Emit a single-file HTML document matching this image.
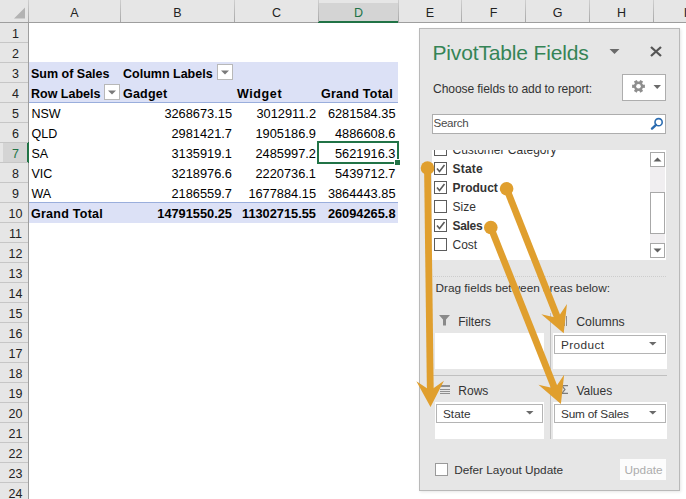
<!DOCTYPE html>
<html><head><meta charset="utf-8"><style>
html,body{margin:0;padding:0;}
body{width:686px;height:499px;overflow:hidden;position:relative;background:#fff;font-family:"Liberation Sans",sans-serif;}
.r{position:absolute;box-sizing:content-box;}
.t{position:absolute;white-space:pre;line-height:1;}
.c{text-align:center;}
</style></head><body>
<div class="r" style="left:0;top:0;width:686px;height:22px;background:#e6e6e6"></div>
<div class="r" style="left:0;top:22px;width:686px;height:1px;background:#9e9e9e"></div>
<div class="r" style="left:318px;top:3px;width:80px;height:18px;background:#d4d4d4"></div>
<div class="r" style="left:318px;top:21px;width:80px;height:2px;background:#217346"></div>
<div class="t c" style="left:54.5px;width:40px;top:7.42px;font-size:12.5px;color:#222">A</div>
<div class="t c" style="left:157.5px;width:40px;top:7.42px;font-size:12.5px;color:#222">B</div>
<div class="t c" style="left:256.5px;width:40px;top:7.42px;font-size:12.5px;color:#222">C</div>
<div class="t c" style="left:338.5px;width:40px;top:7.42px;font-size:12.5px;color:#217346">D</div>
<div class="t c" style="left:410.0px;width:40px;top:7.42px;font-size:12.5px;color:#222">E</div>
<div class="t c" style="left:473.5px;width:40px;top:7.42px;font-size:12.5px;color:#222">F</div>
<div class="t c" style="left:537.5px;width:40px;top:7.42px;font-size:12.5px;color:#222">G</div>
<div class="t c" style="left:601.5px;width:40px;top:7.42px;font-size:12.5px;color:#222">H</div>
<div class="t c" style="left:665.5px;width:40px;top:7.42px;font-size:12.5px;color:#222">I</div>
<div class="r" style="left:28px;top:0px;width:1px;height:22px;background:linear-gradient(#cfcfcf,#a8a8a8)"></div>
<div class="r" style="left:120px;top:0px;width:1px;height:22px;background:linear-gradient(#cfcfcf,#a8a8a8)"></div>
<div class="r" style="left:234px;top:0px;width:1px;height:22px;background:linear-gradient(#cfcfcf,#a8a8a8)"></div>
<div class="r" style="left:318px;top:0px;width:1px;height:22px;background:linear-gradient(#cfcfcf,#a8a8a8)"></div>
<div class="r" style="left:398px;top:0px;width:1px;height:22px;background:linear-gradient(#cfcfcf,#a8a8a8)"></div>
<div class="r" style="left:461px;top:0px;width:1px;height:22px;background:linear-gradient(#cfcfcf,#a8a8a8)"></div>
<div class="r" style="left:525px;top:0px;width:1px;height:22px;background:linear-gradient(#cfcfcf,#a8a8a8)"></div>
<div class="r" style="left:589px;top:0px;width:1px;height:22px;background:linear-gradient(#cfcfcf,#a8a8a8)"></div>
<div class="r" style="left:653px;top:0px;width:1px;height:22px;background:linear-gradient(#cfcfcf,#a8a8a8)"></div>
<svg class="r" style="left:0;top:0" width="28" height="22"><polygon points="14,18.5 25,18.5 25,7.5" fill="#b3b3b3"/></svg>
<div class="r" style="left:0;top:23px;width:28px;height:476px;background:#e6e6e6"></div>
<div class="r" style="left:28px;top:22px;width:1px;height:477px;background:#9e9e9e"></div>
<div class="r" style="left:3px;top:143px;width:24px;height:19px;background:#d4d4d4"></div>
<div class="r" style="left:27px;top:142px;width:2px;height:21px;background:#217346"></div>
<div class="r" style="left:0;top:42px;width:28px;height:1px;background:#c6c6c6"></div>
<div class="t c" style="left:0px;width:31px;top:28.42px;font-size:12.5px;color:#222">1</div>
<div class="r" style="left:0;top:62px;width:28px;height:1px;background:#c6c6c6"></div>
<div class="t c" style="left:0px;width:31px;top:48.42px;font-size:12.5px;color:#222">2</div>
<div class="r" style="left:0;top:82px;width:28px;height:1px;background:#c6c6c6"></div>
<div class="t c" style="left:0px;width:31px;top:68.42px;font-size:12.5px;color:#222">3</div>
<div class="r" style="left:0;top:102px;width:28px;height:1px;background:#c6c6c6"></div>
<div class="t c" style="left:0px;width:31px;top:88.42px;font-size:12.5px;color:#222">4</div>
<div class="r" style="left:0;top:122px;width:28px;height:1px;background:#c6c6c6"></div>
<div class="t c" style="left:0px;width:31px;top:108.42px;font-size:12.5px;color:#222">5</div>
<div class="r" style="left:0;top:142px;width:28px;height:1px;background:#c6c6c6"></div>
<div class="t c" style="left:0px;width:31px;top:128.42px;font-size:12.5px;color:#222">6</div>
<div class="r" style="left:0;top:162px;width:28px;height:1px;background:#c6c6c6"></div>
<div class="t c" style="left:0px;width:31px;top:148.42px;font-size:12.5px;color:#217346">7</div>
<div class="r" style="left:0;top:182px;width:28px;height:1px;background:#c6c6c6"></div>
<div class="t c" style="left:0px;width:31px;top:168.42px;font-size:12.5px;color:#222">8</div>
<div class="r" style="left:0;top:202px;width:28px;height:1px;background:#c6c6c6"></div>
<div class="t c" style="left:0px;width:31px;top:188.42px;font-size:12.5px;color:#222">9</div>
<div class="r" style="left:0;top:222px;width:28px;height:1px;background:#c6c6c6"></div>
<div class="t c" style="left:0px;width:31px;top:208.42px;font-size:12.5px;color:#222">10</div>
<div class="r" style="left:0;top:242px;width:28px;height:1px;background:#c6c6c6"></div>
<div class="t c" style="left:0px;width:31px;top:228.42px;font-size:12.5px;color:#222">11</div>
<div class="r" style="left:0;top:262px;width:28px;height:1px;background:#c6c6c6"></div>
<div class="t c" style="left:0px;width:31px;top:248.42px;font-size:12.5px;color:#222">12</div>
<div class="r" style="left:0;top:282px;width:28px;height:1px;background:#c6c6c6"></div>
<div class="t c" style="left:0px;width:31px;top:268.42px;font-size:12.5px;color:#222">13</div>
<div class="r" style="left:0;top:302px;width:28px;height:1px;background:#c6c6c6"></div>
<div class="t c" style="left:0px;width:31px;top:288.42px;font-size:12.5px;color:#222">14</div>
<div class="r" style="left:0;top:322px;width:28px;height:1px;background:#c6c6c6"></div>
<div class="t c" style="left:0px;width:31px;top:308.42px;font-size:12.5px;color:#222">15</div>
<div class="r" style="left:0;top:342px;width:28px;height:1px;background:#c6c6c6"></div>
<div class="t c" style="left:0px;width:31px;top:328.42px;font-size:12.5px;color:#222">16</div>
<div class="r" style="left:0;top:362px;width:28px;height:1px;background:#c6c6c6"></div>
<div class="t c" style="left:0px;width:31px;top:348.42px;font-size:12.5px;color:#222">17</div>
<div class="r" style="left:0;top:382px;width:28px;height:1px;background:#c6c6c6"></div>
<div class="t c" style="left:0px;width:31px;top:368.42px;font-size:12.5px;color:#222">18</div>
<div class="r" style="left:0;top:402px;width:28px;height:1px;background:#c6c6c6"></div>
<div class="t c" style="left:0px;width:31px;top:388.42px;font-size:12.5px;color:#222">19</div>
<div class="r" style="left:0;top:422px;width:28px;height:1px;background:#c6c6c6"></div>
<div class="t c" style="left:0px;width:31px;top:408.42px;font-size:12.5px;color:#222">20</div>
<div class="r" style="left:0;top:442px;width:28px;height:1px;background:#c6c6c6"></div>
<div class="t c" style="left:0px;width:31px;top:428.42px;font-size:12.5px;color:#222">21</div>
<div class="r" style="left:0;top:462px;width:28px;height:1px;background:#c6c6c6"></div>
<div class="t c" style="left:0px;width:31px;top:448.42px;font-size:12.5px;color:#222">22</div>
<div class="r" style="left:0;top:482px;width:28px;height:1px;background:#c6c6c6"></div>
<div class="t c" style="left:0px;width:31px;top:468.42px;font-size:12.5px;color:#222">23</div>
<div class="r" style="left:0;top:502px;width:28px;height:1px;background:#c6c6c6"></div>
<div class="t c" style="left:0px;width:31px;top:488.42px;font-size:12.5px;color:#222">24</div>
<div class="r" style="left:29px;top:62px;width:369px;height:40px;background:#dce1f6"></div>
<div class="r" style="left:29px;top:102px;width:369px;height:1px;background:#9aaedc"></div>
<div class="r" style="left:29px;top:202px;width:369px;height:1px;background:#9aaedc"></div>
<div class="r" style="left:29px;top:203px;width:369px;height:20px;background:#dce1f6"></div>
<div class="t" style="left:31.00px;top:68.42px;font-size:12.5px;font-weight:bold;color:#000;">Sum of Sales</div>
<div class="t" style="left:123.00px;top:68.42px;font-size:12.5px;font-weight:bold;color:#000;">Column Labels</div>
<div class="t" style="left:31.00px;top:88.42px;font-size:12.5px;font-weight:bold;color:#000;">Row Labels</div>
<div class="t" style="left:123.00px;top:88.42px;font-size:12.5px;font-weight:bold;color:#000;letter-spacing:0.2px">Gadget</div>
<div class="t" style="left:237.00px;top:88.42px;font-size:12.5px;font-weight:bold;color:#000;letter-spacing:0.6px">Widget</div>
<div class="t" style="left:321.00px;top:88.42px;font-size:12.5px;font-weight:bold;color:#000;letter-spacing:0.25px">Grand Total</div>
<div class="r" style="left:217px;top:64px;width:14px;height:14px;background:#fff;border:1px solid #b8b8b8"></div><svg class="r" style="left:217px;top:64px" width="16" height="16"><polygon points="4,6.5 12,6.5 8,10.5" fill="#7a7a7a"/></svg>
<div class="r" style="left:104px;top:84px;width:14px;height:14px;background:#fff;border:1px solid #b8b8b8"></div><svg class="r" style="left:104px;top:84px" width="16" height="16"><polygon points="4,6.5 12,6.5 8,10.5" fill="#7a7a7a"/></svg>
<div class="t" style="left:31.50px;top:108.42px;font-size:12.5px;font-weight:normal;color:#000;">NSW</div>
<div class="t" style="right:454.00px;top:108.16px;font-size:12.8px;font-weight:normal;color:#000;">3268673.15</div>
<div class="t" style="right:370.00px;top:108.16px;font-size:12.8px;font-weight:normal;color:#000;">3012911.2</div>
<div class="t" style="right:290.50px;top:108.16px;font-size:12.8px;font-weight:normal;color:#000;">6281584.35</div>
<div class="t" style="left:31.50px;top:128.42px;font-size:12.5px;font-weight:normal;color:#000;">QLD</div>
<div class="t" style="right:454.00px;top:128.16px;font-size:12.8px;font-weight:normal;color:#000;">2981421.7</div>
<div class="t" style="right:370.00px;top:128.16px;font-size:12.8px;font-weight:normal;color:#000;">1905186.9</div>
<div class="t" style="right:290.50px;top:128.16px;font-size:12.8px;font-weight:normal;color:#000;">4886608.6</div>
<div class="t" style="left:31.50px;top:148.42px;font-size:12.5px;font-weight:normal;color:#000;">SA</div>
<div class="t" style="right:454.00px;top:148.16px;font-size:12.8px;font-weight:normal;color:#000;">3135919.1</div>
<div class="t" style="right:370.00px;top:148.16px;font-size:12.8px;font-weight:normal;color:#000;">2485997.2</div>
<div class="t" style="right:290.50px;top:148.16px;font-size:12.8px;font-weight:normal;color:#000;">5621916.3</div>
<div class="t" style="left:31.50px;top:168.42px;font-size:12.5px;font-weight:normal;color:#000;">VIC</div>
<div class="t" style="right:454.00px;top:168.16px;font-size:12.8px;font-weight:normal;color:#000;">3218976.6</div>
<div class="t" style="right:370.00px;top:168.16px;font-size:12.8px;font-weight:normal;color:#000;">2220736.1</div>
<div class="t" style="right:290.50px;top:168.16px;font-size:12.8px;font-weight:normal;color:#000;">5439712.7</div>
<div class="t" style="left:31.50px;top:188.42px;font-size:12.5px;font-weight:normal;color:#000;">WA</div>
<div class="t" style="right:454.00px;top:188.16px;font-size:12.8px;font-weight:normal;color:#000;">2186559.7</div>
<div class="t" style="right:370.00px;top:188.16px;font-size:12.8px;font-weight:normal;color:#000;">1677884.15</div>
<div class="t" style="right:290.50px;top:188.16px;font-size:12.8px;font-weight:normal;color:#000;">3864443.85</div>
<div class="t" style="left:31.00px;top:208.42px;font-size:12.5px;font-weight:bold;color:#000;letter-spacing:0.25px">Grand Total</div>
<div class="t" style="right:454.00px;top:208.16px;font-size:12.8px;font-weight:bold;color:#000;">14791550.25</div>
<div class="t" style="right:370.00px;top:208.16px;font-size:12.8px;font-weight:bold;color:#000;">11302715.55</div>
<div class="t" style="right:290.50px;top:208.16px;font-size:12.8px;font-weight:bold;color:#000;">26094265.8</div>
<div class="r" style="left:317px;top:141px;width:78px;height:19px;border:2px solid #217346"></div>
<div class="r" style="left:394px;top:159px;width:5px;height:5px;background:#217346;border:1px solid #fff"></div>
<div class="r" style="left:419px;top:28px;width:259px;height:461px;background:#e6e6e6;border:1px solid #b9b9b9;box-shadow:1px 1px 3px rgba(0,0,0,0.10)"></div>
<div class="t" style="left:432.50px;top:42.22px;font-size:21px;font-weight:normal;color:#358456;letter-spacing:-0.15px">PivotTable Fields</div>
<svg class="r" style="left:600px;top:40px" width="70" height="24"><polygon points="9.5,9 19.5,9 14.5,14" fill="#6a6a6a"/><path d="M51,7 L61,16 M61,7 L51,16" stroke="#555" stroke-width="2.3"/></svg>
<div class="t" style="left:433.00px;top:82.76px;font-size:12.1px;font-weight:normal;color:#333;letter-spacing:-0.1px">Choose fields to add to report:</div>
<div class="r" style="left:622px;top:74px;width:42px;height:25px;background:#fff;border:1px solid #adadad"></div>
<svg class="r" style="left:630px;top:78px" width="34" height="18"><g transform="translate(8.5,8.3)" fill="#8e8e8e"><circle r="4.7"/><rect x="-1.6" y="-6.4" width="3.2" height="3" transform="rotate(30)"/><rect x="-1.6" y="-6.4" width="3.2" height="3" transform="rotate(90)"/><rect x="-1.6" y="-6.4" width="3.2" height="3" transform="rotate(150)"/><rect x="-1.6" y="-6.4" width="3.2" height="3" transform="rotate(210)"/><rect x="-1.6" y="-6.4" width="3.2" height="3" transform="rotate(270)"/><rect x="-1.6" y="-6.4" width="3.2" height="3" transform="rotate(330)"/><circle r="2.3" fill="#fff"/></g><polygon points="23.5,7 31,7 27.25,11" fill="#6a6a6a"/></svg>
<div class="r" style="left:432px;top:114px;width:232px;height:18px;background:#fff;border:1px solid #adadad"></div>
<div class="t" style="left:433.50px;top:117.48px;font-size:11.6px;font-weight:normal;color:#4a4a4a;letter-spacing:-0.3px">Search</div>
<svg class="r" style="left:648px;top:115px" width="16" height="18"><circle cx="10.6" cy="7.2" r="3.6" fill="none" stroke="#2b6cb0" stroke-width="1.6"/><path d="M8,9.8 L4,13.6" stroke="#2b6cb0" stroke-width="2.4" stroke-linecap="round"/></svg>
<div class="r" style="left:432px;top:150px;width:234px;height:110px;background:#fff;overflow:hidden" id="fl"><div class="r" style="left:2px;top:-7px;width:11px;height:11px;border:1px solid #5c5c5c;background:#fff"></div><div class="t" style="left:20.5px;top:-6.16px;font-size:12px;font-weight:normal;color:#333;">Customer Category</div><div class="r" style="left:2px;top:12px;width:11px;height:11px;border:1px solid #5c5c5c;background:#fff"></div><svg class="r" style="left:2px;top:12px" width="13" height="13"><path d="M3,6.5 L5.5,9.5 L10.5,3" fill="none" stroke="#5a5a5a" stroke-width="1.6"/></svg><div class="t" style="left:20.5px;top:12.84px;font-size:12px;font-weight:bold;color:#333;letter-spacing:0.2px;">State</div><div class="r" style="left:2px;top:31px;width:11px;height:11px;border:1px solid #5c5c5c;background:#fff"></div><svg class="r" style="left:2px;top:31px" width="13" height="13"><path d="M3,6.5 L5.5,9.5 L10.5,3" fill="none" stroke="#5a5a5a" stroke-width="1.6"/></svg><div class="t" style="left:20.5px;top:31.84px;font-size:12px;font-weight:bold;color:#333;">Product</div><div class="r" style="left:2px;top:50px;width:11px;height:11px;border:1px solid #5c5c5c;background:#fff"></div><div class="t" style="left:20.5px;top:50.84px;font-size:12px;font-weight:normal;color:#333;">Size</div><div class="r" style="left:2px;top:69px;width:11px;height:11px;border:1px solid #5c5c5c;background:#fff"></div><svg class="r" style="left:2px;top:69px" width="13" height="13"><path d="M3,6.5 L5.5,9.5 L10.5,3" fill="none" stroke="#5a5a5a" stroke-width="1.6"/></svg><div class="t" style="left:20.5px;top:69.84px;font-size:12px;font-weight:bold;color:#333;letter-spacing:-0.3px;">Sales</div><div class="r" style="left:2px;top:88px;width:11px;height:11px;border:1px solid #5c5c5c;background:#fff"></div><div class="t" style="left:20.5px;top:88.84px;font-size:12px;font-weight:normal;color:#333;">Cost</div><div class="r" style="left:218px;top:16px;width:15px;height:78px;background:#f0eef0"></div><div class="r" style="left:218px;top:2px;width:13px;height:13px;background:#fff;border:1px solid #a8a8a8"></div><svg class="r" style="left:218px;top:2px" width="15" height="15"><polygon points="3.5,9.5 11.5,9.5 7.5,5.5" fill="#606060"/></svg><div class="r" style="left:218px;top:42px;width:13px;height:40px;background:#fff;border:1px solid #a8a8a8"></div><div class="r" style="left:218px;top:93px;width:13px;height:13px;background:#fff;border:1px solid #a8a8a8"></div><svg class="r" style="left:218px;top:93px" width="15" height="15"><polygon points="3.5,5.5 11.5,5.5 7.5,9.5" fill="#606060"/></svg></div>
<div class="r" style="left:433px;top:276px;width:233px;height:0;border-top:1px dotted #cdcdcd"></div>
<div class="t" style="left:435.50px;top:283.21px;font-size:11.8px;font-weight:normal;color:#333;">Drag fields between areas below:</div>
<div class="r" style="left:435px;top:333px;width:109px;height:36px;background:#fff"></div>
<div class="r" style="left:553px;top:333px;width:114px;height:36px;background:#fff"></div>
<div class="r" style="left:435px;top:402px;width:109px;height:37px;background:#fff"></div>
<div class="r" style="left:553px;top:402px;width:114px;height:37px;background:#fff"></div>
<div class="r" style="left:550px;top:313px;width:1px;height:126px;background:#c0c0c0"></div>
<div class="r" style="left:433px;top:375px;width:234px;height:1px;background:#c0c0c0"></div>
<svg class="r" style="left:438px;top:314px" width="14" height="14"><polygon points="1,1 12,1 8,5.5 8,11.5 5,11.5 5,5.5" fill="#8a8a8a"/></svg>
<div class="t" style="left:458.20px;top:315.84px;font-size:12px;font-weight:normal;color:#333;">Filters</div>
<svg class="r" style="left:558px;top:316px" width="9" height="10"><rect x="0" y="0" width="2" height="10" fill="#8f8f8f"/><rect x="4" y="0" width="1" height="10" fill="#8f8f8f"/><rect x="6" y="0" width="1" height="10" fill="#8f8f8f"/><rect x="8" y="0" width="1" height="10" fill="#8f8f8f"/></svg>
<div class="t" style="left:576.20px;top:315.59px;font-size:12.3px;font-weight:normal;color:#333;">Columns</div>
<svg class="r" style="left:440px;top:385px" width="10" height="9"><rect x="0" y="0" width="10" height="2" fill="#8f8f8f"/><rect x="0" y="4" width="10" height="1" fill="#8f8f8f"/><rect x="0" y="6" width="10" height="1" fill="#8f8f8f"/><rect x="0" y="8" width="10" height="1" fill="#8f8f8f"/></svg>
<div class="t" style="left:458.30px;top:384.84px;font-size:12px;font-weight:normal;color:#333;">Rows</div>
<svg class="r" style="left:561px;top:385px" width="8" height="10"><path d="M7,0.6 L0.8,0.6 L4,4.5 L0.8,8.4 L7,8.4" fill="none" stroke="#7c7c7c" stroke-width="1.2"/></svg>
<div class="t" style="left:576.40px;top:384.84px;font-size:12px;font-weight:normal;color:#333;">Values</div>
<div class="r" style="left:554px;top:335px;width:110px;height:17px;background:#fff;border:1px solid #b4b4b4"></div><div class="t" style="left:561.00px;top:340.01px;font-size:11.8px;font-weight:normal;color:#333;letter-spacing:0.4px">Product</div><svg class="r" style="left:648px;top:341px" width="10" height="6"><polygon points="1,1 8.5,1 4.75,4.5" fill="#6a6a6a"/></svg>
<div class="r" style="left:436px;top:404px;width:105px;height:17px;background:#fff;border:1px solid #b4b4b4"></div><div class="t" style="left:443.00px;top:409.01px;font-size:11.8px;font-weight:normal;color:#333;">State</div><svg class="r" style="left:525px;top:410px" width="10" height="6"><polygon points="1,1 8.5,1 4.75,4.5" fill="#6a6a6a"/></svg>
<div class="r" style="left:554px;top:404px;width:110px;height:17px;background:#fff;border:1px solid #b4b4b4"></div><div class="t" style="left:561.00px;top:409.01px;font-size:11.8px;font-weight:normal;color:#333;letter-spacing:-0.2px">Sum of Sales</div><svg class="r" style="left:648px;top:410px" width="10" height="6"><polygon points="1,1 8.5,1 4.75,4.5" fill="#6a6a6a"/></svg>
<div class="r" style="left:435px;top:463px;width:11px;height:11px;background:#fff;border:1px solid #9a9a9a"></div>
<div class="t" style="left:454.20px;top:464.81px;font-size:11.8px;font-weight:normal;color:#333;">Defer Layout Update</div>
<div class="r" style="left:620px;top:459px;width:46px;height:21px;background:#fcfcfc"></div>
<div class="t" style="left:624.50px;top:464.81px;font-size:11.8px;font-weight:normal;color:#acacac;">Update</div>
<svg class="r" style="left:0;top:0" width="686" height="499"><circle cx="427.5" cy="168" r="6.8" fill="#e09f2e"/><line x1="427.5" y1="168" x2="430.36" y2="396.00" stroke="#e09f2e" stroke-width="6.8"/><polygon points="430.5,407 416.37,381.18 430.29,390.50 443.97,380.83" fill="#e09f2e"/><circle cx="506.6" cy="188.8" r="6.8" fill="#e09f2e"/><line x1="506.6" y1="188.8" x2="559.66" y2="323.07" stroke="#e09f2e" stroke-width="6.8"/><polygon points="563.7,333.3 541.31,314.19 557.64,317.95 566.98,304.05" fill="#e09f2e"/><circle cx="490.8" cy="227.5" r="6.8" fill="#e09f2e"/><line x1="490.8" y1="227.5" x2="556.84" y2="393.68" stroke="#e09f2e" stroke-width="6.8"/><polygon points="560.9,403.9 538.47,384.83 554.81,388.57 564.12,374.64" fill="#e09f2e"/></svg>
</body></html>
